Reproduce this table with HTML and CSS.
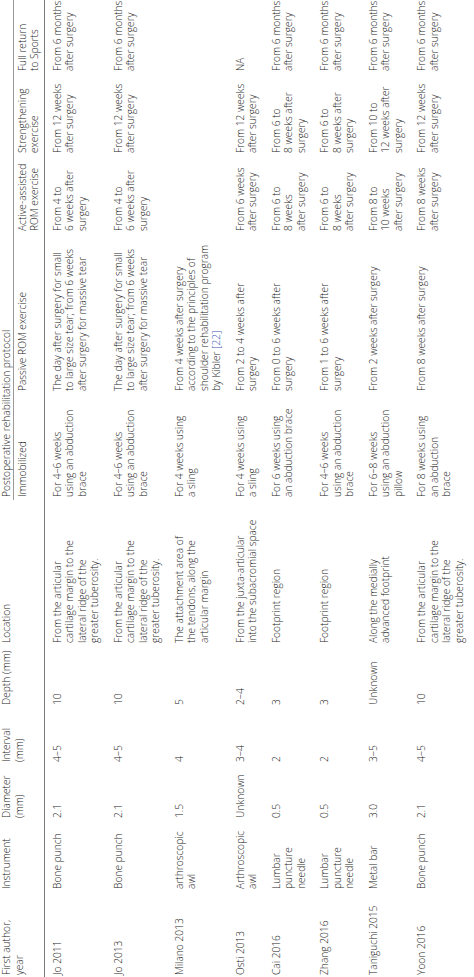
FILE: index.html
```html
<!DOCTYPE html>
<html lang="en">
<head>
<meta charset="utf-8">
<title>Table</title>
<link rel="stylesheet" href="styles.css">
</head>
<body>
<div class="page">
  <div class="sheet">
    <table class="tbl">
      <colgroup>
        <col class="c1"><col class="c2"><col class="c3"><col class="c4"><col class="c5"><col class="c6">
        <col class="c7"><col class="c8"><col class="c9"><col class="c10"><col class="c11">
      </colgroup>
      <thead>
        <tr class="h1">
          <th rowspan="2">First author,<br>year</th>
          <th rowspan="2">Instrument</th>
          <th rowspan="2">Diameter<br>(mm)</th>
          <th rowspan="2">Interval<br>(mm)</th>
          <th rowspan="2">Depth (mm)</th>
          <th rowspan="2">Location</th>
          <th colspan="5" class="group">Postoperative rehabilitation protocol</th>
        </tr>
        <tr class="h2">
          <th>Immobilized</th>
          <th>Passive ROM exercise</th>
          <th>Active-assisted<br>ROM exercise</th>
          <th>Strengthening<br>exercise</th>
          <th>Full return<br>to Sports</th>
        </tr>
      </thead>
      <tbody>
        <tr>
          <td>Jo 2011</td><td>Bone punch</td><td>2.1</td><td>4–5</td><td>10</td>
          <td>From the articular<br>cartilage margin to the<br>lateral ridge of the<br>greater tuberosity.</td>
          <td>For 4–6 weeks<br>using an abduction<br>brace</td>
          <td>The day after surgery for small<br>to large size tear; from 6 weeks<br>after surgery for massive tear</td>
          <td>From 4 to<br>6 weeks after<br>surgery</td>
          <td>From 12 weeks<br>after surgery</td>
          <td>From 6 months<br>after surgery</td>
        </tr>
        <tr>
          <td>Jo 2013</td><td>Bone punch</td><td>2.1</td><td>4–5</td><td>10</td>
          <td>From the articular<br>cartilage margin to the<br>lateral ridge of the<br>greater tuberosity.</td>
          <td>For 4–6 weeks<br>using an abduction<br>brace</td>
          <td>The day after surgery for small<br>to large size tear; from 6 weeks<br>after surgery for massive tear</td>
          <td>From 4 to<br>6 weeks after<br>surgery</td>
          <td>From 12 weeks<br>after surgery</td>
          <td>From 6 months<br>after surgery</td>
        </tr>
        <tr>
          <td>Milano 2013</td><td>arthroscopic<br>awl</td><td>1.5</td><td>4</td><td>5</td>
          <td>The attachment area of<br>the tendons, along the<br>articular margin</td>
          <td>For 4 weeks using<br>a sling</td>
          <td>From 4 weeks after surgery<br>according to the principles of<br>shoulder rehabilitation program<br>by Kibler <a class="ref" href="#r22">[22]</a></td>
          <td></td>
          <td></td>
          <td></td>
        </tr>
        <tr>
          <td>Osti 2013</td><td>Arthroscopic<br>awl</td><td>Unknown</td><td>3–4</td><td>2–4</td>
          <td>From the juxta-articular<br>into the subacromial space</td>
          <td>For 4 weeks using<br>a sling</td>
          <td>From 2 to 4 weeks after<br>surgery</td>
          <td>From 6 weeks<br>after surgery</td>
          <td>From 12 weeks<br>after surgery</td>
          <td>NA</td>
        </tr>
        <tr>
          <td>Cai 2016</td><td>Lumbar<br>puncture<br>needle</td><td>0.5</td><td>2</td><td>3</td>
          <td>Footprint region</td>
          <td>For 6 weeks using<br>an abduction brace</td>
          <td>From 0 to 6 weeks after<br>surgery</td>
          <td>From 6 to<br>8 weeks<br>after surgery</td>
          <td>From 6 to<br>8 weeks after<br>surgery</td>
          <td>From 6 months<br>after surgery</td>
        </tr>
        <tr>
          <td>Zhang 2016</td><td>Lumbar<br>puncture<br>needle</td><td>0.5</td><td>2</td><td>3</td>
          <td>Footprint region</td>
          <td>For 4–6 weeks<br>using an abduction<br>brace</td>
          <td>From 1 to 6 weeks after<br>surgery</td>
          <td>From 6 to<br>8 weeks<br>after surgery</td>
          <td>From 6 to<br>8 weeks after<br>surgery</td>
          <td>From 6 months<br>after surgery</td>
        </tr>
        <tr>
          <td>Taniguchi 2015</td><td>Metal bar</td><td>3.0</td><td>3–5</td><td>Unknown</td>
          <td>Along the medially<br>advanced footprint</td>
          <td>For 6–8 weeks<br>using an abduction<br>pillow</td>
          <td>From 2 weeks after surgery</td>
          <td>From 8 to<br>10 weeks<br>after surgery</td>
          <td>From 10 to<br>12 weeks after<br>surgery</td>
          <td>From 6 months<br>after surgery</td>
        </tr>
        <tr>
          <td>Yoon 2016</td><td>Bone punch</td><td>2.1</td><td>4–5</td><td>10</td>
          <td>From the articular<br>cartilage margin to the<br>lateral ridge of the<br>greater tuberosity.</td>
          <td>For 8 weeks using<br>an abduction<br>brace</td>
          <td>From 8 weeks after surgery</td>
          <td>From 8 weeks<br>after surgery</td>
          <td>From 12 weeks<br>after surgery</td>
          <td>From 6 months<br>after surgery</td>
        </tr>
      </tbody>
    </table>
  </div>
</div>
</body>
</html>
```

FILE: styles.css
```css
html, body {
  margin: 0;
  padding: 0;
  background: #ffffff;
  overflow: hidden;
}

.page {
  width: 474px;
  height: 977px;
  overflow: hidden;
  background: #ffffff;
}

.sheet {
  width: 977px;
  height: 474px;
  overflow: hidden;
  transform-origin: 0 0;
  transform: translateY(977px) rotate(-90deg);
  background: #ffffff;
}

.tbl {
  table-layout: fixed;
  width: 1004px;
  margin: 0 0 0 -1px;
  border-collapse: collapse;
  border-spacing: 0;
  font-family: "Open Sans", "Noto Sans", "DejaVu Sans", sans-serif;
  font-size: 10.2px;
  font-weight: 300;
  line-height: 12.5px;
  color: #1c1c1c;
}

.c1 { width: 86px; }
.c2 { width: 71px; }
.c3 { width: 56px; }
.c4 { width: 57px; }
.c5 { width: 62px; }
.c6 { width: 146px; }
.c7 { width: 106px; }
.c8 { width: 160px; }
.c9 { width: 78px; }
.c10 { width: 82px; }
.c11 { width: 100px; }

.tbl th,
.tbl td {
  padding: 0 0 0 3px;
  text-align: left;
  vertical-align: top;
  white-space: nowrap;
  font-weight: 300;
}

.h1 th {
  padding-top: 0;
  padding-bottom: 0;
}

.h1 th.group {
  height: 12px;
  border-bottom: 1px solid #9a9a9a;
}

.h2 th {
  padding-top: 2px;
  padding-bottom: 3px;
}

thead {
  border-bottom: 1.5px solid #7a7a7a;
}

.tbl td {
  padding-top: 6px;
  padding-bottom: 5px;
}

.ref {
  color: #3d56b8;
  text-decoration: none;
}
```
